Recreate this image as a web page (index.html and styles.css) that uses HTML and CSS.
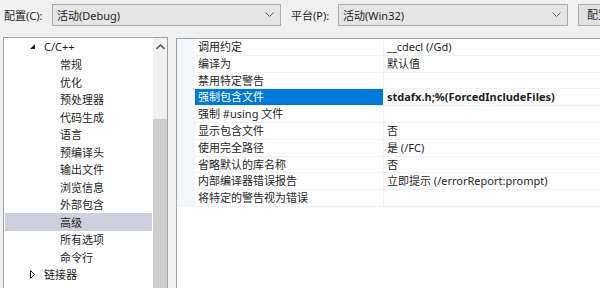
FILE: index.html
```html
<!DOCTYPE html>
<html>
<head>
    <title>属性页</title>
    <link rel="stylesheet" href="styles.css">
</head>
<body>
    <div class="toolbar">
        <span class="bar-label">配置(C):</span>
        <div class="combo combo-config">
            <span>活动(Debug)</span>
            <svg class="chevron" width="9" height="6" viewBox="0 0 9 6"><polyline points="0.5,0.5 4.5,4.5 8.5,0.5" fill="none" stroke="#606060" stroke-width="1"/></svg>
        </div>
        <span class="bar-label platform-label">平台(P):</span>
        <div class="combo combo-platform">
            <span>活动(Win32)</span>
            <svg class="chevron" width="9" height="6" viewBox="0 0 9 6"><polyline points="0.5,0.5 4.5,4.5 8.5,0.5" fill="none" stroke="#606060" stroke-width="1"/></svg>
        </div>
        <div class="bar-button">配置管理器(O)...</div>
    </div>

    <div class="main">
        <div class="tree-panel">
            <ul class="tree-list">
                <li class="tree-row level-1">
                    <svg class="twisty" width="6" height="6" viewBox="0 0 6 6"><polygon points="5,0 5,5 0,5" fill="#1e1e1e"/></svg>
                    <span>C/C++</span>
                </li>
                <li class="tree-row level-2">常规</li>
                <li class="tree-row level-2">优化</li>
                <li class="tree-row level-2">预处理器</li>
                <li class="tree-row level-2">代码生成</li>
                <li class="tree-row level-2">语言</li>
                <li class="tree-row level-2">预编译头</li>
                <li class="tree-row level-2">输出文件</li>
                <li class="tree-row level-2">浏览信息</li>
                <li class="tree-row level-2">外部包含</li>
                <li class="tree-row level-2 selected">高级</li>
                <li class="tree-row level-2">所有选项</li>
                <li class="tree-row level-2">命令行</li>
                <li class="tree-row level-1">
                    <svg class="twisty" width="6" height="9" viewBox="0 0 6 9"><polygon points="0.5,0.5 4.5,4.5 0.5,8.5" fill="none" stroke="#1e1e1e" stroke-width="1"/></svg>
                    <span>链接器</span>
                </li>
            </ul>
            <div class="scrollbar">
                <svg class="scroll-arrow" width="9" height="6" viewBox="0 0 9 6"><polyline points="0.5,5 4.5,1 8.5,5" fill="none" stroke="#606060" stroke-width="1.6"/></svg>
                <div class="scroll-thumb"></div>
            </div>
        </div>

        <div class="grid-panel">
            <div class="grid">
                <div class="gutter"></div>
                <div class="prop-rows">
                    <div class="prop-row"><div class="prop-name">调用约定</div><div class="prop-value">__cdecl (/Gd)</div></div>
                    <div class="prop-row"><div class="prop-name">编译为</div><div class="prop-value">默认值</div></div>
                    <div class="prop-row"><div class="prop-name">禁用特定警告</div><div class="prop-value"></div></div>
                    <div class="prop-row active"><div class="prop-name">强制包含文件</div><div class="prop-value bold">stdafx.h;%(ForcedIncludeFiles)</div></div>
                    <div class="prop-row"><div class="prop-name">强制 #using 文件</div><div class="prop-value"></div></div>
                    <div class="prop-row"><div class="prop-name">显示包含文件</div><div class="prop-value">否</div></div>
                    <div class="prop-row"><div class="prop-name">使用完全路径</div><div class="prop-value">是 (/FC)</div></div>
                    <div class="prop-row"><div class="prop-name">省略默认的库名称</div><div class="prop-value">否</div></div>
                    <div class="prop-row"><div class="prop-name">内部编译器错误报告</div><div class="prop-value">立即提示 (/errorReport:prompt)</div></div>
                    <div class="prop-row"><div class="prop-name">将特定的警告视为错误</div><div class="prop-value"></div></div>
                </div>
            </div>
        </div>
    </div>
</body>
</html>
```

FILE: styles.css
```css
body {
    margin: 0;
    padding: 0;
    background-color: #f0f0f0;
    font-family: 'Noto Sans', 'Noto Sans CJK SC', sans-serif;
    font-size: 11px;
    color: #1e1e1e;
    overflow: hidden;
    height: 288px;
}

.toolbar {
    display: flex;
    align-items: center;
    height: 30px;
    padding: 0 0 0 4px;
    white-space: nowrap;
    overflow: hidden;
}

.toolbar > * {
    flex: none;
}

.bar-label {
    width: 48px;
}

.platform-label {
    width: 47px;
    margin-left: 10px;
}

.combo {
    display: flex;
    align-items: center;
    justify-content: space-between;
    box-sizing: border-box;
    height: 22px;
    padding: 0 6px 0 4px;
    background-color: #e5e5e5;
    border: 1px solid #acacac;
}

.combo-config {
    width: 229px;
}

.combo-platform {
    width: 230px;
}

.bar-button {
    box-sizing: border-box;
    height: 22px;
    line-height: 20px;
    margin-left: 10px;
    padding: 0 8px;
    background-color: #e1e1e1;
    border: 1px solid #adadad;
}

.main {
    display: flex;
    margin-top: 7px;
    height: 251px;
}

.tree-panel {
    display: flex;
    box-sizing: border-box;
    width: 165px;
    margin-left: 3px;
    border: 1px solid #a0a0a0;
    border-bottom: none;
    background-color: #fff;
}

.tree-list {
    flex: 1;
    list-style: none;
    margin: 0;
    padding: 0 1px;
}

.tree-row {
    display: flex;
    align-items: center;
    height: 17.5px;
    white-space: nowrap;
}

.level-1 {
    padding-left: 25px;
}

.level-1 span {
    margin-left: 8px;
}

.level-2 {
    padding-left: 55px;
}

.twisty {
    flex: none;
}

.tree-row.selected {
    background-color: #cdd0dc;
}

.scrollbar {
    display: flex;
    flex-direction: column;
    align-items: center;
    width: 14px;
    background-color: #f0f0f0;
}

.scroll-arrow {
    margin-top: 6px;
}

.scroll-thumb {
    width: 14px;
    flex: 1;
    margin-top: 69px;
    background-color: #cdcdcd;
}

.grid-panel {
    flex: 1;
    margin-left: 8px;
    margin-top: 1px;
    border: 1px solid #a0a0a0;
    border-right: none;
    border-bottom: none;
    background-color: #fff;
}

.grid {
    display: flex;
    align-items: flex-start;
}

.gutter {
    width: 18px;
    height: 168px;
    background-color: #f3f6fb;
}

.prop-rows {
    flex: 1;
}

.prop-row {
    display: flex;
    height: 16.8px;
    box-sizing: border-box;
    border-bottom: 1px solid #eef1f6;
}

.prop-name {
    width: 189px;
    box-sizing: border-box;
    padding-left: 3px;
    line-height: 15.8px;
    border-right: 1px solid #eef1f6;
    white-space: nowrap;
}

.prop-value {
    flex: 1;
    padding-left: 3px;
    line-height: 15.8px;
    white-space: nowrap;
}

.prop-row.active .prop-name {
    background-color: #0078d7;
    color: #fff;
}

.bold {
    font-weight: bold;
}
```
